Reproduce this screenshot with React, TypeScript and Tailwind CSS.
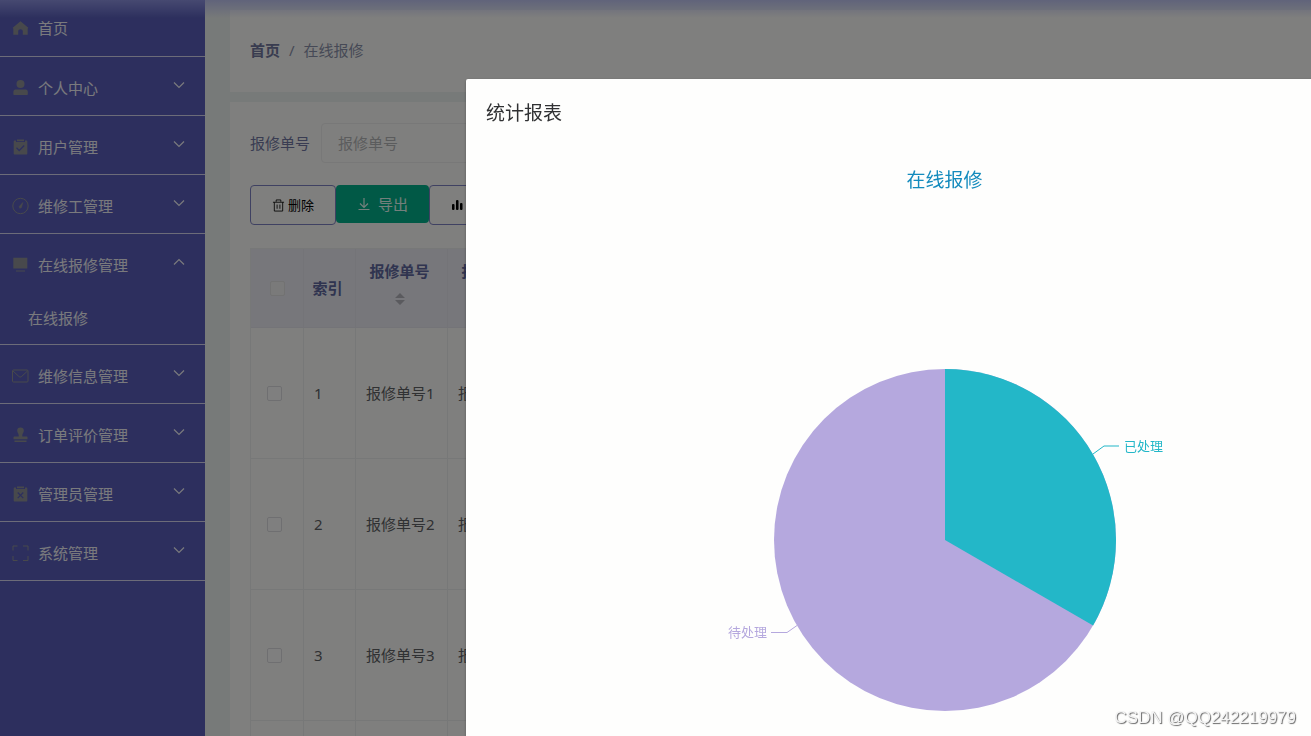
import type { ReactNode } from "react";

type MenuEntry = {
  label: string;
  icon: ReactNode;
  expandable?: boolean;
  children?: string[];
};

function Icon({ children, className = "size-[18px]" }: { children: ReactNode; className?: string }) {
  return (
    <svg viewBox="0 0 18 18" className={`shrink-0 ${className}`} fill="none" stroke="currentColor" strokeWidth="1" aria-hidden="true">
      {children}
    </svg>
  );
}

const menu: MenuEntry[] = [
  {
    label: "首页",
    icon: (
      <Icon>
        <path d="M9.500 2.200 2 8.600c-.4.400-.2.900.3.900v6.300h4.900v-3.600c0-1.100.9-2 2.300-2s2.300.9 2.300 2v3.600h4.900V9.500c.5 0 .7-.5.3-.9L9.500 2.200Z" fill="currentColor" stroke="none" />
      </Icon>
    ),
  },
  {
    label: "个人中心",
    expandable: true,
    icon: (
      <Icon>
        <circle cx="9.500" cy="5" r="4" fill="currentColor" stroke="none" />
        <path d="M4.500 10.500h10.200c1.300 0 2.100 1 2.100 2.300v2.400c0 .4-.3.700-.7.700h-13c-.4 0-.7-.3-.7-.7v-2.400c0-1.300.8-2.300 2.100-2.300Z" fill="currentColor" stroke="none" />
      </Icon>
    ),
  },
  {
    label: "用户管理",
    expandable: true,
    icon: (
      <Icon>
        <path d="M3.500 2.500H5V4h9V2.500h1.500c.5 0 .8.300.8.800v12.400c0 .5-.3.800-.8.800h-12c-.5 0-.8-.3-.8-.8V3.300c0-.5.300-.8.800-.8Z" fill="currentColor" stroke="none" />
        <path d="M6 1.500h7v1.700H6z" fill="currentColor" stroke="none" />
        <path d="m5.500 9.800 2.700 2.700 5-5" className="stroke-[#5a5fbc]" strokeWidth="1.300" />
      </Icon>
    ),
  },
  {
    label: "维修工管理",
    expandable: true,
    icon: (
      <Icon>
        <circle cx="9.500" cy="9" r="7.700" />
        <path d="m11.800 5.500-1.300 5-1.700.800-.6-1.700 3.600-4.100Z" fill="currentColor" strokeWidth=".5" />
      </Icon>
    ),
  },
  {
    label: "在线报修管理",
    expandable: true,
    children: ["在线报修"],
    icon: (
      <Icon>
        <path d="M2.300 1.800h14v10.700h-14zM5 14.600h9v1H5z" fill="currentColor" stroke="none" />
      </Icon>
    ),
  },
  {
    label: "维修信息管理",
    expandable: true,
    icon: (
      <Icon>
        <rect x="1.500" y="3" width="15.500" height="12" rx="1" />
        <path d="m2 4 5.800 5.400c.9.800 2 .8 2.900 0L16.500 4" />
      </Icon>
    ),
  },
  {
    label: "订单评价管理",
    expandable: true,
    icon: (
      <Icon>
        <path d="M9.500 1.500a3.300 3.300 0 0 1 3.300 3.300c0 1.900-1.500 2.700-1.500 4.400v1.300h4.200c.6 0 1 .4 1 1v1.800h-14v-1.800c0-.6.4-1 1-1h4.200V9.200c0-1.700-1.500-2.500-1.500-4.400a3.300 3.300 0 0 1 3.300-3.300ZM3.500 14.500h12V16h-12z" fill="currentColor" stroke="none" />
      </Icon>
    ),
  },
  {
    label: "管理员管理",
    expandable: true,
    icon: (
      <Icon>
        <path d="M3.500 2.500H5V4h9V2.500h1.500c.5 0 .8.300.8.800v12.400c0 .5-.3.800-.8.800h-12c-.5 0-.8-.3-.8-.8V3.300c0-.5.300-.8.800-.8Z" fill="currentColor" stroke="none" />
        <path d="M6 1.500h7v1.700H6z" fill="currentColor" stroke="none" />
        <path d="m6.700 7.500 5.600 5.600m0-5.600-5.600 5.600" className="stroke-[#5a5fbc]" strokeWidth="1.300" />
      </Icon>
    ),
  },
  {
    label: "系统管理",
    expandable: true,
    icon: (
      <Icon>
        <path d="M2 6.500V2h4.500M12 2h5v4.500M17 12v4.500h-5M6.500 16.500H2V12" />
      </Icon>
    ),
  },
];

function Sidebar() {
  return (
    <nav className="w-[205px] shrink-0 bg-[#5a5fbc] text-[#f4f4fb]" aria-label="主菜单">
      <ul>
        {menu.map((item, i) => (
          <li key={item.label} className="border-b border-[#d8d9f2]">
            <button
              type="button"
              aria-expanded={item.expandable ? Boolean(item.children) : undefined}
              className={`flex w-full items-center gap-[9px] pr-5 pl-[11px] text-left ${i === 0 ? "h-14" : "h-[58px] pt-[3px]"}`}
            >
              <span className="text-[#909399]">{item.icon}</span>
              <span className="flex-1">{item.label}</span>
              {item.expandable && (
                <svg viewBox="0 0 12 8" className={`mb-[6px] h-2 w-3 ${item.children ? "rotate-180" : ""}`} fill="none" stroke="currentColor" strokeWidth="1.200" aria-hidden="true">
                  <path d="m1 1.500 5 5 5-5" />
                </svg>
              )}
            </button>
            {item.children?.map((child) => (
              <a key={child} href="#repair" className="flex h-[52px] items-center pl-7">
                {child}
              </a>
            ))}
          </li>
        ))}
      </ul>
    </nav>
  );
}

function Checkbox({ label, className = "border-[#dedfe2] bg-white" }: { label: string; className?: string }) {
  return (
    <input
      type="checkbox"
      aria-label={label}
      className={`block size-[15px] appearance-none rounded-xs border ${className}`}
    />
  );
}

function RecordTable() {
  const cell = "border-r border-b border-[#eff0f0] px-[10px]";
  const head = "border-r border-b border-[#e8e9f0]";
  return (
    <table className="mt-[23px] w-full min-w-[760px] table-fixed border-separate border-spacing-0 border-t border-l border-[#eff0f0] text-left">
      <colgroup>
        <col className="w-[53px]" />
        <col className="w-[52px]" />
        <col className="w-[92px]" />
        <col className="w-[92px]" />
        <col />
      </colgroup>
      <thead className="bg-[#eeeff7] text-[#6068a0]">
        <tr className="h-[79px]">
          <th className={head}>
            <Checkbox label="全选" className="mx-auto border-[#e4e4e4] bg-[#f4f4f4]" />
          </th>
          <th className={`${head} pr-1 text-center font-bold`}>索引</th>
          {["报修单号", "报修名称"].map((name) => (
            <th key={name} className={`${head} pr-1 text-center font-bold whitespace-nowrap`}>
              <div className="flex flex-col items-center gap-[10px] pb-3">
                <span className="leading-6">{name}</span>
                <svg viewBox="0 0 10 12" className="h-3 w-[10px] fill-[#b4b5bd]" aria-hidden="true">
                  <path d="M5 0 10 5H0ZM5 12 0 7h10Z" />
                </svg>
              </div>
            </th>
          ))}
          <th className={head} />
        </tr>
      </thead>
      <tbody className="text-[#606266]">
        {[1, 2, 3].map((n) => (
          <tr key={n} className="h-[131px]">
            <td className={cell}>
              <Checkbox label={`选择第${n}行`} className="ml-[6px] border-[#dedfe2] bg-white" />
            </td>
            <td className={cell}>{n}</td>
            <td className={`${cell} whitespace-nowrap`}>报修单号{n}</td>
            <td className={`${cell} whitespace-nowrap`}>报修名称{n}</td>
            <td className={cell} />
          </tr>
        ))}
        <tr className="h-[131px]">
          <td className={cell} />
          <td className={cell} />
          <td className={cell} />
          <td className={cell} />
          <td className={cell} />
        </tr>
      </tbody>
    </table>
  );
}

function Toolbar() {
  const outlined = "flex h-10 items-center gap-[3px] rounded border border-[#7f83c4] px-[21px] text-[13px] text-black";
  return (
    <div className="mt-[22px] flex items-start">
      <button type="button" className={outlined}>
        <svg viewBox="0 0 14 14" className="size-[13px]" fill="none" stroke="currentColor" strokeWidth=".9" aria-hidden="true">
          <path d="M1 3.500h12M4.500 3V1h5v2M2.500 3.500V13h9V3.500M5.500 6v4.500M8.500 6v4.500" />
        </svg>
        删除
      </button>
      <button type="button" className="flex h-[38px] items-center gap-[7px] rounded bg-[#02b28c] px-[21px] text-[15px] text-[#e8fff8]">
        <svg viewBox="0 0 14 14" className="size-[14px]" fill="none" stroke="currentColor" strokeWidth="1.200" aria-hidden="true">
          <path d="M7 1v9M3 6.500l4 4 4-4M1.500 12.500h11" />
        </svg>
        导出
      </button>
      <button type="button" className={outlined}>
        <svg viewBox="0 0 12 12" className="size-3" fill="currentColor" aria-hidden="true">
          <rect x="1" y="5" width="2.500" height="6" rx="1" />
          <rect x="5" y="1" width="2.500" height="10" rx="1" />
          <rect x="9" y="4" width="2.500" height="7" rx="1" />
        </svg>
        报表
      </button>
    </div>
  );
}

function StatusPie() {
  return (
    <svg viewBox="0 0 440 360" className="mx-auto mt-[166px] block h-[360px] w-[440px]" role="img" aria-label="在线报修状态">
      <circle cx="220" cy="180" r="171" fill="#b5a8de" />
      <path d="M220 180V9a171 171 0 0 1 148.100 256.500Z" fill="#23b7c8" />
      <path d="m368 94 11-8h15" fill="none" stroke="#23b7c8" />
      <path d="m72 265.500-10 7H46" fill="none" stroke="#b5a8de" />
      <text x="399" y="91" fontSize="13" fill="#23b7c8">已处理</text>
      <text x="3" y="277" fontSize="13" fill="#b5a8de">待处理</text>
    </svg>
  );
}

function ReportDialog() {
  return (
    <div className="fixed inset-0 flex items-start overflow-hidden bg-black/50">
      <section
        role="dialog"
        aria-modal="true"
        aria-labelledby="report-title"
        className="mt-[79px] ml-[466px] min-h-screen w-[73%] shrink-0 rounded-xs bg-[#fefefd] px-5 pt-5 shadow-[0_1px_3px_rgba(0,0,0,0.3)]"
      >
        <h2 id="report-title" className="text-[19px] leading-7 text-[#303133]">统计报表</h2>
        <h3 className="mt-[39px] text-center text-[19px] leading-7 text-[#148bbd]">在线报修</h3>
        <StatusPie />
      </section>
    </div>
  );
}

export default function App() {
  return (
    <div className="flex h-screen overflow-hidden bg-[#eff4f3] font-['Noto_Sans','Noto_Sans_CJK_SC',sans-serif] text-[15px] leading-6">
      <Sidebar />
      <main className="min-w-0 flex-1 pt-[10px] pl-[25px]">
        <nav className="flex h-[82px] items-center gap-[9px] bg-[#fffffc] px-5 pb-[2px] text-[#8c93ac]" aria-label="面包屑">
          <a href="#home" className="font-bold text-[#7278a0]">首页</a>
          <span>/</span>
          <span>在线报修</span>
        </nav>
        <div className="mt-[10px] bg-[#fffffc] px-5 pt-[21px]">
          <form className="flex items-center gap-[11px]">
            <label htmlFor="order-no" className="text-[#7379a5]">报修单号</label>
            <input
              id="order-no"
              type="text"
              placeholder="报修单号"
              className="h-10 w-[220px] rounded border border-[#f0f0f0] px-4 placeholder:text-[#b7b8bb]"
            />
          </form>
          <Toolbar />
          <RecordTable />
        </div>
      </main>
      <div className="pointer-events-none absolute inset-x-0 top-0 h-[18px] bg-linear-to-b from-[#a9aff7]/65 to-transparent" />
      <ReportDialog />
      <div className="pointer-events-none fixed right-[15px] bottom-[6px] font-['Liberation_Sans',sans-serif] text-[17px] text-[#f4f4f4] [text-shadow:1px_1px_1px_#666]">
        CSDN @QQ242219979
      </div>
    </div>
  );
}
